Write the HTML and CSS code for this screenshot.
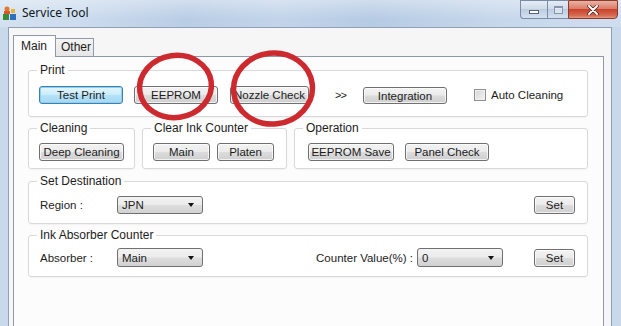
FILE: index.html
```html
<!DOCTYPE html>
<html>
<head>
<meta charset="utf-8">
<title>Service Tool</title>
<link rel="stylesheet" href="styles.css">
</head>
<body>
<div class="window">
  <div class="titlebar">
    <svg class="app-icon" width="13" height="14" viewBox="0 0 13 14">
      <circle cx="4" cy="3" r="2.5" fill="#e0782c"/>
      <rect x="1" y="5" width="6" height="3" fill="#d9552a"/>
      <rect x="0" y="8" width="6" height="6" fill="#3b8a3a"/>
      <rect x="7" y="8" width="6" height="6" fill="#2f6fc0"/>
      <rect x="8" y="3" width="4" height="4" fill="#e7b53a"/>
    </svg>
    <span class="title">Service Tool</span>
    <div class="controls">
      <div class="ctl ctl-min"><span class="min-glyph"></span></div>
      <div class="ctl ctl-max"><span class="max-glyph"></span></div>
      <div class="ctl ctl-close">
        <svg width="12" height="10" viewBox="0 0 12 10"><path d="M2 1 L10 9 M10 1 L2 9" stroke="#4a1a12" stroke-width="3.4" stroke-linecap="round"/><path d="M2 1 L10 9 M10 1 L2 9" stroke="#fff" stroke-width="2" stroke-linecap="round"/></svg>
      </div>
    </div>
  </div>
  <div class="client">
    <div class="tabs">
      <div class="tab tab-active">Main</div>
      <div class="tab">Other</div>
    </div>
    <div class="panel">
      <fieldset class="group group-print">
        <legend>Print</legend>
        <div class="row">
          <button class="btn btn-focus">Test Print</button>
          <button class="btn gap-11">EEPROM</button>
          <button class="btn btn-nozzle gap-12">Nozzle Check</button>
          <span class="arrows">&gt;&gt;</span>
          <button class="btn btn-integration">Integration</button>
          <span class="checkbox"></span>
          <span class="check-label">Auto Cleaning</span>
        </div>
      </fieldset>
      <div class="group-row">
        <fieldset class="group group-cleaning">
          <legend>Cleaning</legend>
          <div class="row">
            <button class="btn btn-deep">Deep Cleaning</button>
          </div>
        </fieldset>
        <fieldset class="group group-ink">
          <legend>Clear Ink Counter</legend>
          <div class="row row-gap-7">
            <button class="btn btn-small">Main</button>
            <button class="btn btn-small">Platen</button>
          </div>
        </fieldset>
        <fieldset class="group group-operation">
          <legend>Operation</legend>
          <div class="row row-gap-11">
            <button class="btn btn-save">EEPROM Save</button>
            <button class="btn">Panel Check</button>
          </div>
        </fieldset>
      </div>
      <fieldset class="group group-dest">
        <legend>Set Destination</legend>
        <div class="row">
          <span class="field-label">Region :</span>
          <div class="combo"><span>JPN</span><span class="combo-arrow"></span></div>
          <button class="btn btn-set push-right">Set</button>
        </div>
      </fieldset>
      <fieldset class="group group-absorber">
        <legend>Ink Absorber Counter</legend>
        <div class="row">
          <span class="field-label">Absorber :</span>
          <div class="combo combo-tall"><span>Main</span><span class="combo-arrow"></span></div>
          <span class="counter-label">Counter Value(%) :</span>
          <div class="combo combo-tall"><span>0</span><span class="combo-arrow"></span></div>
          <button class="btn btn-set btn-set-gap">Set</button>
        </div>
      </fieldset>
    </div>
  </div>
  <svg class="marks" width="621" height="326" viewBox="0 0 621 326">
    <ellipse cx="175.5" cy="86.5" rx="36" ry="31" transform="rotate(-8 175.5 86.5)" fill="none" stroke="#cc2a2f" stroke-width="5.5"/>
    <ellipse cx="273" cy="88.5" rx="39.5" ry="35.5" transform="rotate(-6 273 88.5)" fill="none" stroke="#cc2a2f" stroke-width="5.5"/>
  </svg>
</div>
</body>
</html>
```

FILE: styles.css
```css
* { box-sizing: border-box; }
html, body { margin: 0; padding: 0; }
body {
  width: 621px;
  height: 326px;
  overflow: hidden;
  font-family: "Liberation Sans", Arial, sans-serif;
  font-size: 11.5px;
  color: #1c1c1c;
}
.window {
  position: relative;
  width: 621px;
  height: 326px;
  display: flex;
  flex-direction: column;
  background: linear-gradient(90deg, #c9d9ec 0%, #c3d5ea 40%, #bfd2e8 70%, #c8d9ec 100%);
}
.titlebar {
  height: 27px;
  flex: none;
  display: flex;
  align-items: flex-start;
  padding-left: 3px;
  background:
    linear-gradient(180deg, rgba(255,255,255,0.35), rgba(255,255,255,0) 70%),
    linear-gradient(90deg, #d3e1f0 0%, #cddcee 12%, #b9cde5 30%, #c2d4ea 45%, #b6cbe4 60%, #c6d7eb 80%, #cfdeef 100%);
}
.app-icon { margin-top: 6px; flex: none; }
.title {
  margin-left: 6px;
  margin-top: 6px;
  font-family: "Noto Sans", "Liberation Sans", sans-serif;
  font-size: 12px;
  line-height: 14px;
  color: #101820;
}
.controls {
  margin-left: auto;
  margin-right: 3px;
  display: flex;
  height: 19px;
}
.ctl {
  height: 19px;
  border: 1px solid #7b8ba3;
  display: flex;
  align-items: center;
  justify-content: center;
}
.ctl-min {
  width: 27px;
  border-radius: 0 0 0 4px;
  border-right: none;
  background: linear-gradient(#e4ecf6, #d0dcea 45%, #bccde2 50%, #d4e1ef);
}
.ctl-max {
  width: 21px;
  border-right: none;
  background: linear-gradient(#e4ecf6, #d0dcea 45%, #bccde2 50%, #d4e1ef);
}
.ctl-close {
  width: 50px;
  border-radius: 0 0 4px 0;
  border-color: #8a3a2e;
  background: linear-gradient(#eab2a4, #dc7d68 45%, #c9432c 50%, #d66a52 85%, #e39a80);
}
.min-glyph {
  width: 10px;
  height: 4px;
  margin-top: 4px;
  background: #fff;
  border: 1px solid #56647a;
}
.max-glyph {
  width: 9px;
  height: 8px;
  border: 1px solid #8796ab;
  border-top-width: 2px;
  background: rgba(255,255,255,0.4);
}
.client {
  flex: 1;
  margin: 0 9px 0 8px;
  border: 1px solid #8fa0b6;
  border-bottom: none;
  background: #f6f6f6;
  padding: 7px 7px 0 4px;
  display: flex;
  flex-direction: column;
}
.tabs {
  display: flex;
  align-items: flex-end;
  height: 21px;
  flex: none;
  font-size: 12px;
}
.tab {
  height: 18px;
  border: 1px solid #8e9aa7;
  border-bottom: none;
  padding: 0 5px;
  line-height: 17px;
  background: linear-gradient(#f4f4f4, #e6e6e6);
  margin-left: -1px;
  width: 39px;
}
.tab-active {
  position: relative;
  z-index: 1;
  height: 22px;
  width: 43px;
  margin-left: 0;
  margin-bottom: -1px;
  background: #fcfcfc;
  padding: 2px 0 0 7px;
  line-height: 17px;
  border-right: 1px solid #8e9aa7;
}
.panel {
  flex: 1;
  border: 1px solid #8e9aa7;
  border-bottom: none;
  background: #fcfcfc;
  padding: 6px 15px 0 14px;
}
.group {
  margin: 0;
  min-inline-size: 0;
  border: 1px solid #d8d9da;
  border-radius: 3px;
  background: #fff;
  box-shadow: 0 1px 1px rgba(0,0,0,0.04);
  padding-left: 0;
  padding-right: 0;
}
.group legend {
  padding: 0 3px;
  margin-left: 8px;
  line-height: 14px;
  font-size: 12px;
  color: #1c1c1c;
}
.row {
  display: flex;
  align-items: center;
}
.row-gap-7 { gap: 7px; }
.row-gap-11 { gap: 11px; }
.group-print { padding-top: 9px; padding-bottom: 12px; }
.group-print .row { padding-left: 10px; }
.group-row {
  display: flex;
  gap: 7px;
  margin-top: 4px;
}
.group-cleaning { width: 107px; padding-top: 8px; padding-bottom: 7px; }
.group-cleaning .row { padding-left: 10px; }
.group-ink { width: 145px; padding-top: 8px; padding-bottom: 7px; }
.group-ink .row { padding-left: 10px; }
.group-operation { flex: 1; padding-top: 8px; padding-bottom: 7px; }
.group-operation .row { padding-left: 13px; }
.group-dest { margin-top: 5px; padding-top: 8px; padding-bottom: 9px; }
.group-absorber { margin-top: 4px; padding-top: 6px; padding-bottom: 9px; }
.group-dest .row, .group-absorber .row { padding: 0 12px 0 11px; }

.btn {
  font-family: "Liberation Sans", Arial, sans-serif;
  font-size: 11.5px;
  color: #1c1c1c;
  width: 84px;
  height: 18px;
  padding: 0;
  border: 1px solid #707070;
  border-radius: 3px;
  background: linear-gradient(#f3f3f3 0%, #ebebeb 48%, #dcdcdc 52%, #cfcfcf 100%);
  box-shadow: inset 0 0 0 1px rgba(255,255,255,0.7);
  line-height: 16px;
  flex: none;
  white-space: nowrap;
  overflow: hidden;
}
.btn-focus {
  border-color: #3c7fb1;
  background: linear-gradient(#e6f6fd 0%, #c9ecfc 48%, #b3e2f9 52%, #a6d8f2 100%);
  box-shadow: inset 0 0 0 1px #8fd0f0;
}
.gap-11 { margin-left: 11px; }
.gap-12 { margin-left: 12px; }
.btn-nozzle { width: 79px; }
.arrows {
  margin-left: 26px;
  width: 11px;
  letter-spacing: -1px;
  font-size: 11px;
}
.btn-integration { margin-left: 17px; height: 17px; }
.checkbox {
  margin-left: 27px;
  width: 12px;
  height: 12px;
  border: 1px solid #8e8f8f;
  background: linear-gradient(135deg, #d4d4d4, #f4f4f4);
  box-shadow: inset 0 0 0 1px #f0f0f0;
  flex: none;
}
.check-label { margin-left: 5px; }
.btn-deep { width: 85px; }
.btn-small { width: 57px; }
.btn-save { width: 86px; }
.field-label { width: 77px; flex: none; }
.combo {
  width: 86px;
  height: 18px;
  border: 1px solid #707070;
  border-radius: 3px;
  background: linear-gradient(#f3f3f3 0%, #ebebeb 48%, #dddddd 52%, #d2d2d2 100%);
  display: flex;
  align-items: center;
  padding: 0 8px 0 4px;
  flex: none;
}
.combo-tall { height: 19px; }
.combo-arrow {
  margin-left: auto;
  width: 0;
  height: 0;
  border-left: 3.5px solid transparent;
  border-right: 3.5px solid transparent;
  border-top: 4px solid #111;
}
.btn-set { width: 41px; }
.push-right { margin-left: auto; }
.counter-label { margin-left: auto; margin-right: 4px; }
.btn-set-gap { margin-left: 31px; }
.marks {
  position: absolute;
  left: 0;
  top: 0;
  pointer-events: none;
}
```
